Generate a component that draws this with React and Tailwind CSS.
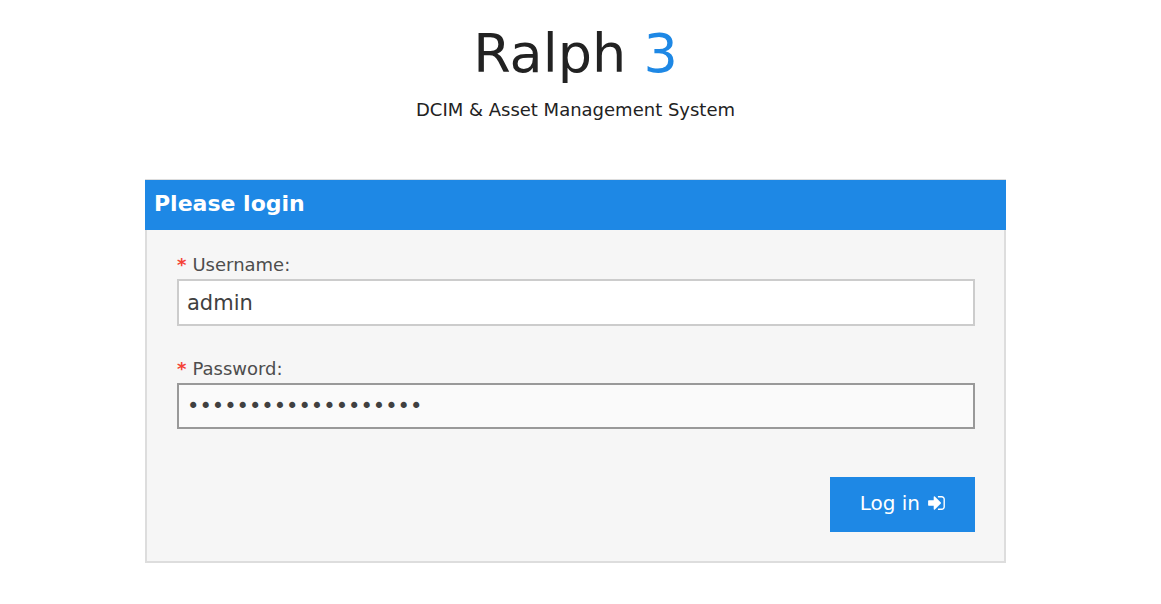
import { useState } from "react";

function SignInIcon() {
  return (
    <svg
      viewBox="128 256 1536 1280"
      className="w-[17px] h-[14px] fill-current"
      aria-hidden="true"
    >
      <path d="M1312 896q0 26-19 45l-544 544q-19 19-45 19t-45-19-19-45v-288h-448q-26 0-45-19t-19-45v-384q0-26 19-45t45-19h448v-288q0-26 19-45t45-19 45 19l544 544q19 19 19 45zm352-352v704q0 119-84.5 203.5t-203.5 84.5h-320q-13 0-22.5-9.5t-9.5-22.5q0-4-1-20t-.5-26.5 3-23.5 10-19.5 20.5-6.5h320q66 0 113-47t47-113v-704q0-66-47-113t-113-47h-312l-11.5-1-11.5-3-8-5.5-7-9-2-13.5q0-4-1-20t-.5-26.5 3-23.5 10-19.5 20.5-6.5h320q119 0 203.5 84.5t84.5 203.5z" />
    </svg>
  );
}

function FieldLabel({ htmlFor, children }) {
  return (
    <label
      htmlFor={htmlFor}
      className="flex gap-[6px] text-[18px] leading-[28px] text-[#4d4d4d]"
    >
      <span className="font-bold text-[#f44336]">*</span>
      <span>{children}</span>
    </label>
  );
}

export default function App() {
  const [username, setUsername] = useState("admin");
  const [password, setPassword] = useState("correcthorsebattery");

  const handleSubmit = (event) => {
    event.preventDefault();
  };

  return (
    <div className="bg-white pl-4 pr-[26px] pb-10 font-['DejaVu_Sans',sans-serif] text-[#222222]">
      <header className="pt-4 text-center">
        <h1 className="text-[54px] leading-[76px]">
          Ralph <span className="text-[#1e88e5]">3</span>
        </h1>
        <p className="mt-1 text-[18px] leading-[28px]">
          DCIM &amp; Asset Management System
        </p>
      </header>

      <main className="mx-auto mt-[55px] w-full max-w-[861px] border-t border-[#dddddd]">
        <h2 className="bg-[#1e88e5] px-[9px] text-[22px] leading-[48px] pb-[2px] font-bold text-white">
          Please login
        </h2>
        <form
          onSubmit={handleSubmit}
          className="border-2 border-t-0 border-[#dddddd] bg-[#f6f6f6] pl-[30px] pr-[29px] pt-[21px] pb-[29px]"
        >
          <FieldLabel htmlFor="username">Username:</FieldLabel>
          <input
            id="username"
            type="text"
            value={username}
            onChange={(event) => setUsername(event.target.value)}
            className="block h-[47px] w-full border-2 border-[#cccccc] bg-white px-2 text-[21px] text-[#404040] outline-none focus:border-[#999999] focus:bg-[#fafafa]"
          />
          <div className="mt-[29px]">
            <FieldLabel htmlFor="password">Password:</FieldLabel>
            <input
              id="password"
              type="password"
              value={password}
              onChange={(event) => setPassword(event.target.value)}
              className="block h-[46px] w-full border-2 border-[#999999] bg-[#fafafa] px-2 text-[21px] text-[#404040] outline-none"
            />
          </div>
          <div className="mt-12 flex justify-end">
            <button
              type="submit"
              className="flex h-[55px] items-center gap-2 bg-[#1e88e5] px-[30px] pb-[3px] text-[20px] text-white hover:bg-[#1976d2]"
            >
              Log in
              <SignInIcon />
            </button>
          </div>
        </form>
      </main>
    </div>
  );
}
